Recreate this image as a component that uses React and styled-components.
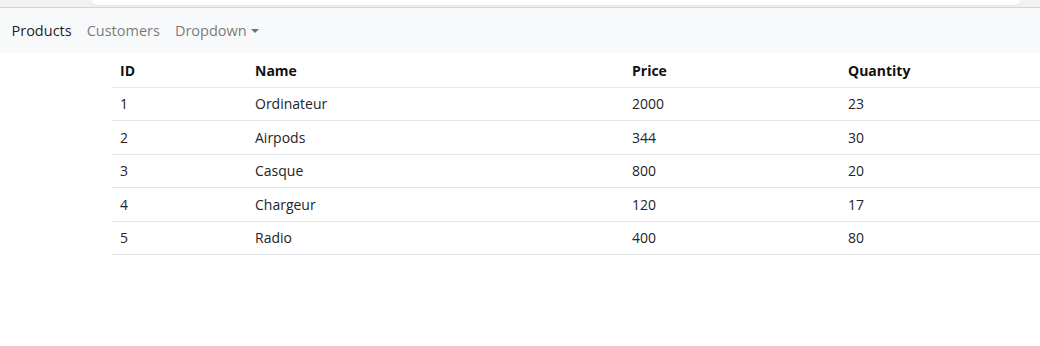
import React from "react";
import styled, { createGlobalStyle } from "styled-components";

const GlobalStyle = createGlobalStyle`
  html, body { margin: 0; padding: 0; background: #ffffff; overflow: hidden; }
  body {
    font-family: "Open Sans", "Noto Sans", "Liberation Sans", sans-serif;
    color: #212529;
    -webkit-font-smoothing: antialiased;
  }
`;

const Chrome = styled.div`
  display: flex;
  height: 7px;
  background: #f1f1f1;
  border-bottom: 1px solid #d4d4d4;
  padding: 0 20px 0 92px;
`;

const ChromeField = styled.div`
  flex: 1;
  height: 5px;
  background: #ffffff;
  border-radius: 0 0 8px 8px;
  box-shadow: 0 1px 1px rgba(0, 0, 0, 0.06);
`;

const Navbar = styled.nav`
  display: flex;
  align-items: center;
  height: 45px;
  background: #f8f9fa;
  padding: 0 4px;
`;

const NavLink = styled.a`
  display: flex;
  align-items: center;
  padding: 0 7.5px;
  font-size: 14.5px;
  color: ${(p) => (p.$active ? "rgba(0,0,0,0.9)" : "rgba(0,0,0,0.55)")};
  text-decoration: none;
  cursor: pointer;
`;

const Caret = styled.span`
  display: inline-block;
  margin-left: 4px;
  margin-top: 1px;
  border-top: 4.5px solid currentColor;
  border-left: 4.5px solid transparent;
  border-right: 4.5px solid transparent;
`;

const Container = styled.main`
  padding-left: 112px;
  padding-top: 1px;
`;

const Table = styled.table`
  width: 100%;
  border-collapse: collapse;
  font-size: 14px;
  color: #212529;
`;

const Cell = styled.td`
  box-sizing: border-box;
  height: 33.5px;
  padding: 0 8px;
  border-bottom: 1px solid #e3e6e9;
  text-align: left;
  vertical-align: middle;
  font-weight: 400;
`;

const HeadCell = styled(Cell).attrs({ as: "th" })`
  height: 33px;
  font-weight: 700;
  color: #111;
  border-bottom-color: #e6e8ea;
`;

const products = [
  { id: 1, name: "Ordinateur", price: 2000, qty: 23 },
  { id: 2, name: "Airpods", price: 344, qty: 30 },
  { id: 3, name: "Casque", price: 800, qty: 20 },
  { id: 4, name: "Chargeur", price: 120, qty: 17 },
  { id: 5, name: "Radio", price: 400, qty: 80 },
];

export default function App() {
  return (
    <>
      <GlobalStyle />
      <Chrome>
        <ChromeField />
      </Chrome>
      <Navbar>
        <NavLink $active>Products</NavLink>
        <NavLink>Customers</NavLink>
        <NavLink>
          Dropdown
          <Caret />
        </NavLink>
      </Navbar>
      <Container>
        <Table>
          <colgroup>
            <col style={{ width: 135 }} />
            <col style={{ width: 377 }} />
            <col style={{ width: 216 }} />
            <col />
          </colgroup>
          <thead>
            <tr>
              <HeadCell>ID</HeadCell>
              <HeadCell>Name</HeadCell>
              <HeadCell>Price</HeadCell>
              <HeadCell>Quantity</HeadCell>
            </tr>
          </thead>
          <tbody>
            {products.map((p) => (
              <tr key={p.id}>
                <Cell>{p.id}</Cell>
                <Cell>{p.name}</Cell>
                <Cell>{p.price}</Cell>
                <Cell>{p.qty}</Cell>
              </tr>
            ))}
          </tbody>
        </Table>
      </Container>
    </>
  );
}
